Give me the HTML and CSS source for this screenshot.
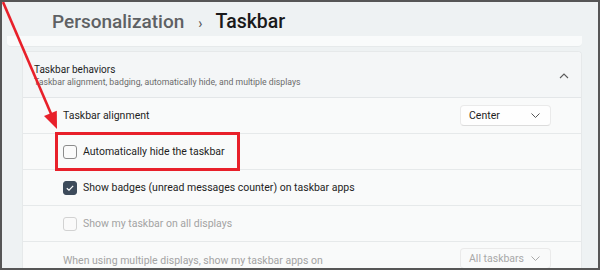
FILE: index.html
```html
<!DOCTYPE html>
<html lang="en">
<head>
<meta charset="UTF-8" />
<title>Settings - Taskbar</title>
<link rel="stylesheet" href="styles.css">
</head>
<body>

<div class="frame">
  <!-- Breadcrumb title -->
  <h1 class="crumbs">
    <span class="crumb-parent">Personalization</span>
    <span class="crumb-sep">›</span>
    <span class="crumb-current">Taskbar</span>
  </h1>

  <div class="card-stub"></div>

  <!-- Expander: taskbar behaviors -->
  <section class="expander">
    <header class="expander-head">
      <div>
        <div class="head-title">Taskbar behaviors</div>
        <div class="head-sub">Taskbar alignment, badging, automatically hide, and multiple displays</div>
      </div>
      <svg class="chev-up" width="10" height="6" viewBox="0 0 10 6">
        <polyline points="1,5 5,1 9,5" fill="none" stroke="#5c5c5c" stroke-width="1.1"/>
      </svg>
    </header>

    <div class="row">
      <span class="row-label">Taskbar alignment</span>
      <div class="select">
        <span>Center</span>
        <svg width="9" height="5" viewBox="0 0 9 5"><polyline points="0.5,0.5 4.5,4.5 8.5,0.5" fill="none" stroke="#555" stroke-width="1"/></svg>
      </div>
    </div>

    <div class="row row-marked">
      <span class="mark">
        <span class="check"></span>
        <span class="row-label">Automatically hide the taskbar</span>
      </span>
    </div>

    <div class="row">
      <span class="check checked">
        <svg width="8" height="6" viewBox="0 0 8 6"><polyline points="0.8,3.2 3,5.2 7.2,0.8" fill="none" stroke="#fff" stroke-width="1.2"/></svg>
      </span>
      <span class="row-label">Show badges (unread messages counter) on taskbar apps</span>
    </div>

    <div class="row disabled">
      <span class="check"></span>
      <span class="row-label">Show my taskbar on all displays</span>
    </div>

    <div class="row disabled row-last">
      <span class="row-label">When using multiple displays, show my taskbar apps on</span>
      <div class="select">
        <span>All taskbars</span>
        <svg width="9" height="5" viewBox="0 0 9 5"><polyline points="0.5,0.5 4.5,4.5 8.5,0.5" fill="none" stroke="#aaa" stroke-width="1"/></svg>
      </div>
    </div>
  </section>

  <!-- Annotation arrow -->
  <svg class="arrow" width="600" height="270" viewBox="0 0 600 270">
    <line x1="3" y1="2" x2="52" y2="116" stroke="#e8202a" stroke-width="2.6"/>
    <polygon points="57,129 56.8,110.7 44,116.1" fill="#e8202a"/>
  </svg>
</div>

</body>
</html>
```

FILE: styles.css
```css
*, *::before, *::after {
  box-sizing: border-box;
}
html, body {
  margin: 0;
  padding: 0;
  background: #fff;
  font-family: Roboto, 'Noto Sans', sans-serif;
}

/* Window frame */
.frame {
  position: relative;
  width: 600px;
  height: 270px;
  border: 2px solid #565656;
  background: #eef2f3;
  overflow: hidden;
}

/* Breadcrumb */
.crumbs {
  display: flex;
  align-items: baseline;
  height: 34px;
  margin: 0;
  padding: 9px 0 0 50px;
  font-size: 19px;
  font-weight: 500;
  line-height: 22px;
}
.crumb-parent {
  color: #5e6163;
}
.crumb-sep {
  margin: 0 13px 0 14px;
  font-size: 14px;
  color: #5a5a5a;
}
.crumb-current {
  color: #1a1a1a;
  font-size: 19.5px;
}

.card-stub {
  height: 11px;
  margin: 0 16px 4px 5px;
  background: #f9fbfb;
  border-radius: 0 0 4px 4px;
  border-bottom: 1px solid #e6eaeb;
}

/* Expander card */
.expander {
  margin: 0 16px 0 20px;
  background: #f9fafa;
  border: 1px solid #e6e9ea;
  border-bottom: none;
  border-radius: 4px 4px 0 0;
}
.expander-head {
  display: flex;
  align-items: center;
  justify-content: space-between;
  height: 46px;
  padding: 2px 12px 0 11px;
  background: #f4f6f7;
  border-bottom: 1px solid #e3e6e8;
  border-radius: 4px 4px 0 0;
}
.head-title {
  font-size: 10px;
  color: #1e1e1e;
  line-height: 13px;
}
.head-sub {
  font-size: 8.7px;
  color: #6b6b6b;
  line-height: 12px;
}

/* Setting rows */
.row {
  display: flex;
  align-items: center;
  height: 36px;
  padding: 0 30px 0 40px;
  border-bottom: 1px solid #e6e9ea;
  font-size: 10.5px;
  color: #1e1e1e;
}
.row-label {
  flex: 1;
}
.row-marked {
  padding-left: 32px;
}
.mark {
  display: inline-flex;
  align-items: center;
  height: 39px;
  margin: -2px 0;
  padding: 0 12px 0 5px;
  border: 3px solid #e8202a;
}
.row-last {
  border-bottom: none;
}

.check {
  display: inline-flex;
  align-items: center;
  justify-content: center;
  width: 14px;
  height: 14px;
  margin-right: 6px;
  border: 1px solid #8c8c8c;
  border-radius: 3px;
  background: #fbfbfb;
}
.check.checked {
  background: #3d4b5b;
  border-color: #3d4b5b;
}

.select {
  display: flex;
  align-items: center;
  justify-content: space-between;
  width: 91px;
  height: 21px;
  padding: 0 10px 0 8px;
  background: #fefefe;
  border: 1px solid #eaeaea;
  border-bottom-color: #dcdcdc;
  border-radius: 4px;
  font-size: 10.5px;
  color: #1e1e1e;
}

/* Disabled rows */
.disabled {
  color: #a3a3a3;
}
.disabled .check {
  border-color: #d2d2d2;
  background: #fafafa;
}
.disabled .select {
  color: #a8a8a8;
  background: #f9fafa;
  align-self: flex-start;
  margin-top: 6px;
}

/* Annotation overlay */
.arrow {
  position: absolute;
  left: -2px;
  top: -2px;
  pointer-events: none;
}
```
